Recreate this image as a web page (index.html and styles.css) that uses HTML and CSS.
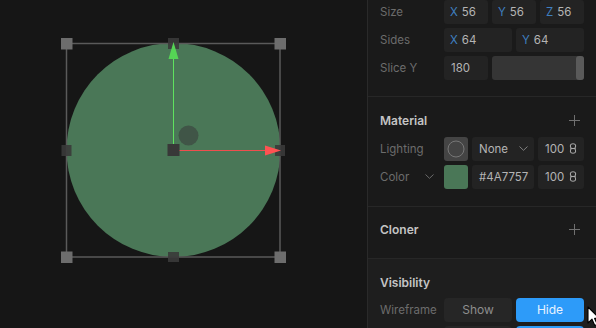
FILE: index.html
```html
<!DOCTYPE html>
<html>
<head>
<meta charset="utf-8">
<link rel="stylesheet" href="styles.css">
</head>
<body>
<div class="app">
  <div class="canvas">
    <svg class="stage" width="367" height="328" viewBox="0 0 367 328">
      <circle cx="173.5" cy="150" r="107" fill="#4a7757"/>
      <rect x="66.5" y="43.5" width="213.5" height="213.5" fill="none" stroke="#5a5a5a" stroke-width="1.5"/>
      <circle cx="188.5" cy="135.5" r="10" fill="#3e4f44" opacity="0.85"/>
      <rect x="61" y="38" width="11.5" height="11.5" fill="#6d6d6d"/>
      <rect x="274.5" y="38" width="11.5" height="11.5" fill="#6d6d6d"/>
      <rect x="61" y="251.5" width="11.5" height="11.5" fill="#6d6d6d"/>
      <rect x="274.5" y="251.5" width="11.5" height="11.5" fill="#6d6d6d"/>
      <rect x="168" y="38" width="11" height="11" fill="#3a3a3a" opacity="0.9"/>
      <rect x="61.5" y="145" width="10" height="11" fill="#3a3a3a" opacity="0.9"/>
      <rect x="275" y="145" width="10" height="11" fill="#3a3a3a" opacity="0.9"/>
      <rect x="168" y="252" width="11" height="10" fill="#3a3a3a" opacity="0.9"/>
      <line x1="173.5" y1="150" x2="173.5" y2="56" stroke="#5fe25f" stroke-width="1"/>
      <polygon points="173.5,42 168.5,59 178.5,59" fill="#55d455"/>
      <line x1="173.5" y1="150.5" x2="266" y2="150.5" stroke="#f04e4e" stroke-width="1"/>
      <polygon points="281,150.5 265,145.5 265,155.5" fill="#ff5252"/>
      <rect x="167.5" y="144" width="12" height="12" fill="#383838"/>
    </svg>
  </div>
  <div class="panel">
    <section class="sec sec-top">
      <div class="row">
        <span class="label">Size</span>
        <div class="fields">
          <div class="box w44"><span class="axis">X</span>56</div>
          <div class="box w44"><span class="axis">Y</span>56</div>
          <div class="box w44"><span class="axis">Z</span>56</div>
        </div>
      </div>
      <div class="row">
        <span class="label">Sides</span>
        <div class="fields">
          <div class="box w68"><span class="axis">X</span>64</div>
          <div class="box w68"><span class="axis">Y</span>64</div>
        </div>
      </div>
      <div class="row">
        <span class="label">Slice Y</span>
        <div class="fields">
          <div class="box w44 pad7">180</div>
          <div class="slider"><div class="knob"></div></div>
        </div>
      </div>
    </section>
    <section class="sec sec-mat">
      <div class="head">
        <span class="title">Material</span>
        <svg class="plus" width="11" height="11" viewBox="0 0 11 11"><path d="M5.5 0V11M0 5.5H11" stroke="#707070" stroke-width="1"/></svg>
      </div>
      <div class="rows">
        <div class="row r24">
          <span class="label">Lighting</span>
          <div class="fields">
            <div class="swatch gray"><svg width="18" height="18" viewBox="0 0 18 18"><circle cx="9" cy="9" r="8" fill="none" stroke="#777" stroke-width="1"/></svg></div>
            <div class="box w62 pad7 drop">None<svg class="chev" width="9" height="5" viewBox="0 0 9 5"><path d="M0.5 0.5L4.5 4.3L8.5 0.5" fill="none" stroke="#808080" stroke-width="1"/></svg></div>
            <div class="box w46 pad7 op">100<svg class="opic" width="8" height="11" viewBox="0 0 8 11"><path d="M4 0.8C1 0.8 0.8 3 2.2 5.5C0.8 8 1 10.2 4 10.2C7 10.2 7.2 8 5.8 5.5C7.2 3 7 0.8 4 0.8Z" fill="none" stroke="#a8a8a8" stroke-width="1.1"/><path d="M1.5 5.5H6.5" stroke="#a8a8a8" stroke-width="1.1"/></svg></div>
          </div>
        </div>
        <div class="row r24">
          <span class="label lchev">Color<svg class="chev" width="9" height="5" viewBox="0 0 9 5"><path d="M0.5 0.5L4.5 4.3L8.5 0.5" fill="none" stroke="#6a6a6a" stroke-width="1"/></svg></span>
          <div class="fields">
            <div class="swatch green"></div>
            <div class="box w62 pad7">#4A7757</div>
            <div class="box w46 pad7 op">100<svg class="opic" width="8" height="11" viewBox="0 0 8 11"><path d="M4 0.8C1 0.8 0.8 3 2.2 5.5C0.8 8 1 10.2 4 10.2C7 10.2 7.2 8 5.8 5.5C7.2 3 7 0.8 4 0.8Z" fill="none" stroke="#a8a8a8" stroke-width="1.1"/><path d="M1.5 5.5H6.5" stroke="#a8a8a8" stroke-width="1.1"/></svg></div>
          </div>
        </div>
      </div>
    </section>
    <section class="sec sec-clon">
      <div class="head">
        <span class="title">Cloner</span>
        <svg class="plus" width="11" height="11" viewBox="0 0 11 11"><path d="M5.5 0V11M0 5.5H11" stroke="#707070" stroke-width="1"/></svg>
      </div>
    </section>
    <section class="sec sec-vis">
      <div class="head">
        <span class="title">Visibility</span>
      </div>
      <div class="rows">
        <div class="row r24">
          <span class="label">Wireframe</span>
          <div class="fields">
            <div class="btn">Show</div>
            <div class="btn on">Hide</div>
          </div>
        </div>
        <div class="row r24">
          <span class="label"></span>
          <div class="fields">
            <div class="btn"></div>
            <div class="btn on"></div>
          </div>
        </div>
      </div>
    </section>
  </div>
  <svg class="cursor" width="14" height="22" viewBox="0 0 14 22"><path d="M1 1V17L5 13.2L7.8 19.5L10.3 18.4L7.6 12.4H12.6Z" fill="#fff" stroke="#000" stroke-width="1.1" stroke-linejoin="round"/></svg>
</div>
</body>
</html>
```

FILE: styles.css
```css
* { box-sizing: border-box; }
html, body { margin: 0; padding: 0; }
body {
  background: #161616;
  font-family: Inter, "Noto Sans", sans-serif;
  font-size: 11px;
  overflow: hidden;
}
.app {
  position: relative;
  display: flex;
  width: 596px;
  height: 328px;
  overflow: hidden;
}
.canvas {
  width: 367px;
  height: 328px;
  flex: none;
  background: #161616;
}
.stage { display: block; }
.panel {
  width: 229px;
  flex: none;
  border-left: 1px solid #2a2a2a;
  background: #1a1a1a;
  display: flex;
  flex-direction: column;
}
.sec {
  padding: 0 12px 0 12px;
  border-bottom: 1px solid #272727;
}
.sec-top {
  display: flex;
  flex-direction: column;
  gap: 4.5px;
  padding-bottom: 16px;
}
.sec-mat { padding-top: 16px; padding-bottom: 17px; }
.sec-clon { padding-top: 15px; padding-bottom: 20px; }
.sec-vis { padding-top: 16px; background: #1e1e1e; border-bottom: none; flex: 1; }
.row {
  display: flex;
  align-items: center;
  height: 23.5px;
}
.row.r24 { height: 24px; }
.rows { display: flex; flex-direction: column; gap: 4px; margin-top: 8px; }
.sec-vis .rows { margin-top: 7px; }
.label {
  width: 64px;
  flex: none;
  color: #6c6c6c;
  font-size: 11.5px;
}
.lchev { display: flex; align-items: center; justify-content: space-between; padding-right: 10px; }
.fields {
  display: flex;
  gap: 4px;
  height: 100%;
  flex: 1;
}
.box {
  height: 100%;
  background: #232323;
  border-radius: 3px;
  color: #b4b4b4;
  display: flex;
  align-items: center;
  padding-left: 6px;
  font-size: 11.5px;
}
.pad7 { padding-left: 7px; }
.w44 { width: 44px; }
.w68 { width: 68px; }
.w62 { width: 62px; }
.w46 { width: 46px; }
.axis { color: #3f7fc0; margin-right: 4px; }
.slider {
  flex: 1;
  height: 100%;
  background: #353535;
  border-radius: 3px;
  display: flex;
  justify-content: flex-end;
}
.knob { width: 8px; height: 100%; background: #5a5a5a; border-radius: 3px; }
.head {
  display: flex;
  align-items: center;
  justify-content: space-between;
  height: 16px;
  padding-right: 4px;
}
.title { color: #c4c4c4; font-weight: 600; font-size: 12px; }
.plus { display: block; }
.swatch {
  width: 24px;
  height: 100%;
  border-radius: 3px;
  display: flex;
  align-items: center;
  justify-content: center;
}
.swatch.gray { background: #444; }
.swatch.green { background: #4a7757; }
.drop { justify-content: space-between; padding-right: 6px; }
.op { gap: 4px; }
.opic { display: block; margin-left: 1px; }
.chev { display: block; }
.btn {
  width: 68px;
  height: 100%;
  border-radius: 4px;
  background: #262626;
  color: #8e8e8e;
  display: flex;
  align-items: center;
  justify-content: center;
  font-size: 12px;
}
.btn.on { background: #2d9bf9; color: #e8f3ff; }
.cursor { position: absolute; left: 587px; top: 306px; }
```
